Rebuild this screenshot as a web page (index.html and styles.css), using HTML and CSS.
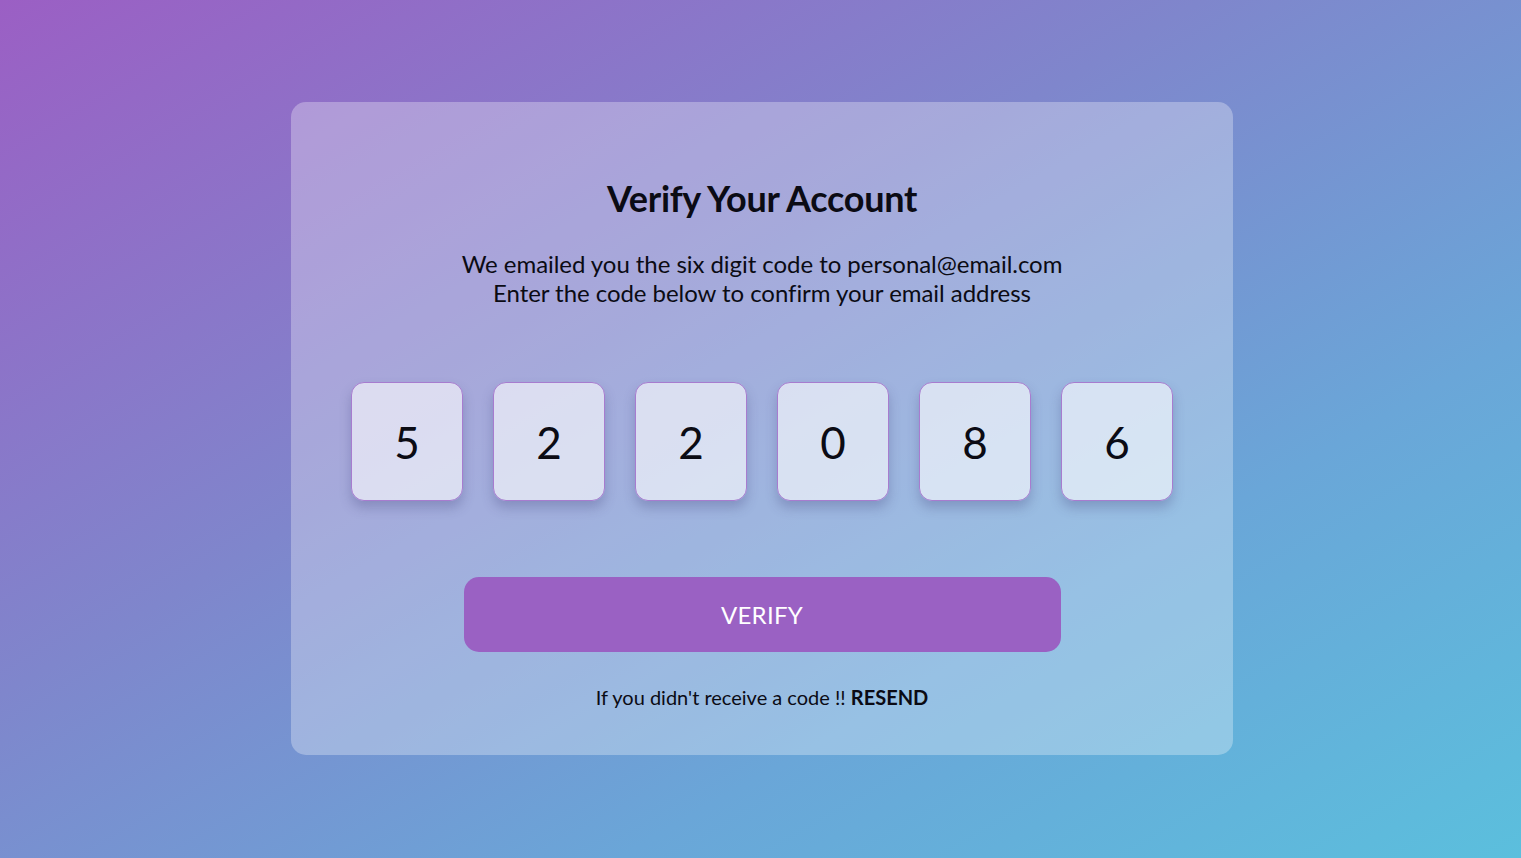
FILE: index.html
```html
<!DOCTYPE html>
<html lang="en">
<head>
<meta charset="utf-8">
<title>Verify Your Account</title>
<link rel="stylesheet" href="styles.css">
</head>
<body>
<main class="page">
  <section class="card">
    <h1 class="title">Verify Your Account</h1>
    <p class="subtitle">We emailed you the six digit code to personal@email.com<br>Enter the code below to confirm your email address</p>
    <div class="code">
      <input class="digit" type="text" maxlength="1" value="5">
      <input class="digit" type="text" maxlength="1" value="2">
      <input class="digit" type="text" maxlength="1" value="2">
      <input class="digit" type="text" maxlength="1" value="0">
      <input class="digit" type="text" maxlength="1" value="8">
      <input class="digit" type="text" maxlength="1" value="6">
    </div>
    <button class="verify" type="button">VERIFY</button>
    <p class="resend">If you didn't receive a code !! <strong>RESEND</strong></p>
  </section>
</main>
</body>
</html>
```

FILE: styles.css
```css
* { box-sizing: border-box; }
html, body { margin: 0; height: 100%; }
body {
  font-family: Lato, "Open Sans", sans-serif;
  color: #0b0b14;
  background: linear-gradient(150deg, #9b5fc4 0%, #7f86cc 40%, #6aa6d8 70%, #5bbfdd 100%);
}
.page {
  height: 100%;
  display: flex;
  justify-content: center;
  padding: 102px 0 0 3px;
}
.card {
  width: 942px;
  height: 653px;
  border-radius: 15px;
  background: rgba(255, 255, 255, 0.3);
  padding: 75px 60px 0;
  display: flex;
  flex-direction: column;
  align-items: center;
}
.title {
  margin: 0;
  font-size: 36px;
  line-height: 43px;
  font-weight: 700;
  letter-spacing: -0.3px;
}
.subtitle {
  margin: 29px 0 0;
  font-size: 24px;
  line-height: 29px;
  text-align: center;
  letter-spacing: -0.05px;
}
.code {
  margin-top: 75px;
  display: flex;
  gap: 30px;
}
.digit {
  width: 112px;
  height: 119px;
  border: 1px solid #a77ccf;
  border-radius: 13px;
  background: rgba(255, 255, 255, 0.6);
  box-shadow: 0 7px 12px rgba(60, 60, 120, 0.28);
  font-family: Lato, sans-serif;
  font-size: 44px;
  text-align: center;
  color: #0b0b14;
  padding: 0;
  outline: none;
}
.verify {
  margin-top: 76px;
  width: 597px;
  height: 75px;
  border: none;
  border-radius: 15px;
  background: #9a61c3;
  color: #fff;
  font-family: Lato, sans-serif;
  font-size: 24px;
  letter-spacing: 0.3px;
}
.resend {
  margin: 33px 0 0;
  font-size: 20px;
  line-height: 24px;
}
.resend strong { font-weight: 700; }
```
